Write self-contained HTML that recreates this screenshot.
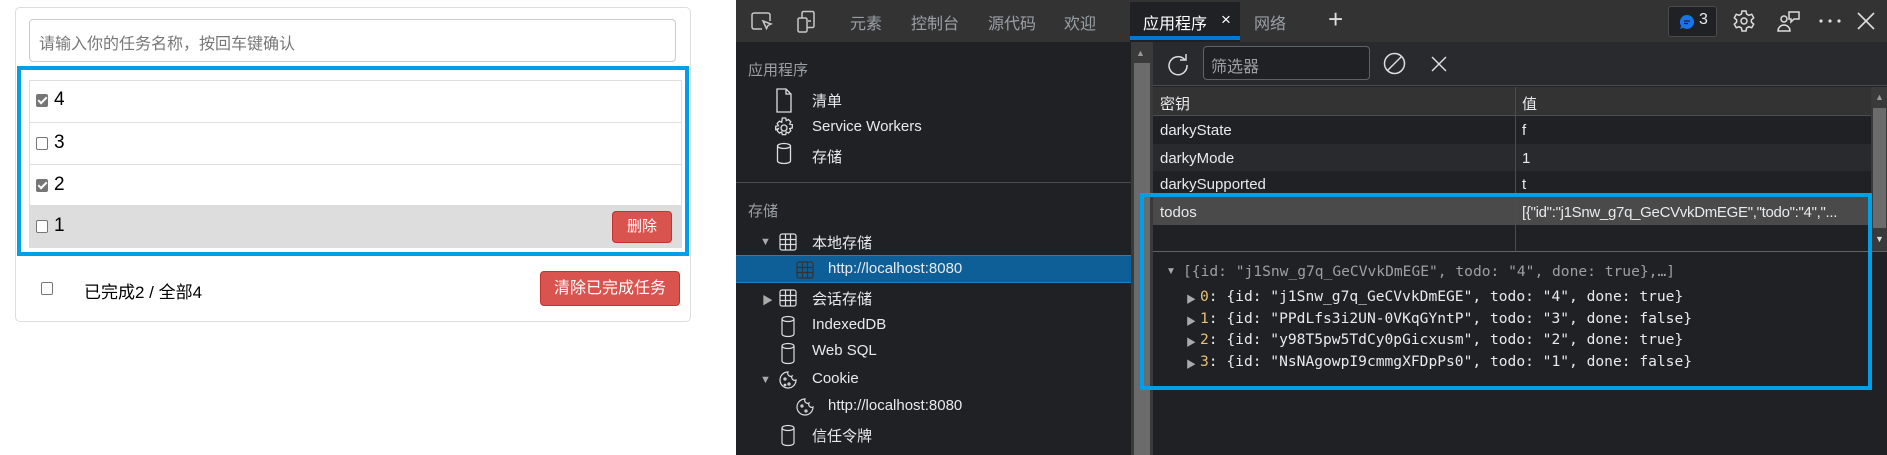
<!DOCTYPE html>
<html><head><meta charset="utf-8"><style>
*{box-sizing:border-box;margin:0;padding:0}
body{width:1887px;height:455px;position:relative;overflow:hidden;background:#fff;font-family:"Liberation Sans","Noto Sans CJK SC",sans-serif}
.a{position:absolute}
.cb{position:absolute;width:12px;height:13px;border:1px solid #767676;border-radius:2px;background:#fff}
.cb.on{background:#767676}
.cb.on:after{content:"";position:absolute;left:3px;top:0px;width:3px;height:7px;border:solid #fff;border-width:0 2px 2px 0;transform:rotate(45deg)}
.row{position:absolute;left:29px;width:653px;height:42px;border-top:1px solid #ddd;font-size:19px;color:#000}
.dt{color:#e8eaed;font-size:15px;white-space:nowrap}
.tb{color:#9aa0a6;font-size:16px}
.si{position:absolute;left:812px;color:#e8eaed;font-size:15px;white-space:nowrap}
.mono{font-family:"DejaVu Sans Mono","Liberation Mono",monospace;font-size:14.6px;white-space:pre;color:#e8eaed}
</style></head><body>
<!-- left -->
<div class="a" style="left:15px;top:7px;width:676px;height:315px;border:1px solid #ddd;border-radius:5px"></div>
<div class="a" style="left:29px;top:19px;width:647px;height:43px;border:1px solid #ccc;border-radius:4px;font-size:16px;color:#777;padding:10px 0 0 9px">请输入你的任务名称，按回车键确认</div>
<div class="a" style="left:29px;top:80px;width:653px;height:168px;border:1px solid #ddd"></div>
<div class="row" style="top:80px;border-top:none"><div class="cb on" style="left:7px;top:14px"></div><span class="a" style="left:25px;top:9px">4</span></div>
<div class="row" style="top:122px"><div class="cb" style="left:7px;top:14px"></div><span class="a" style="left:25px;top:9px">3</span></div>
<div class="row" style="top:164px"><div class="cb on" style="left:7px;top:14px"></div><span class="a" style="left:25px;top:9px">2</span></div>
<div class="row" style="top:205px;height:43px;background:#ddd"><div class="cb" style="left:7px;top:14px"></div><span class="a" style="left:25px;top:9px">1</span>
<div class="a" style="left:583px;top:5px;width:60px;height:32px;background:#d9534f;border:1px solid #c9302c;border-radius:4px;color:#fff;font-size:15px;text-align:center;line-height:30px">删除</div></div>
<div class="a" style="left:17px;top:66px;width:672px;height:190px;border:4px solid #00a0e9"></div>
<div class="cb" style="left:41px;top:282px"></div>
<div class="a" style="left:84px;top:278px;font-size:17px;color:#000">已完成2 / 全部4</div>
<div class="a" style="left:540px;top:271px;width:140px;height:35px;background:#d9534f;border:1px solid #c9302c;border-radius:4px;color:#fff;font-size:16px;text-align:center;line-height:33px">清除已完成任务</div>
<!-- devtools -->
<div class="a" style="left:736px;top:0;width:1151px;height:455px;background:#202124"></div>
<div class="a" style="left:736px;top:0;width:1151px;height:42px;background:#333"></div>
<svg class="a" style="left:750px;top:10px" width="70" height="24" viewBox="0 0 70 24" fill="none" stroke="#c8c8c8" stroke-width="1.5"><path d="M12 19H4a2 2 0 0 1-2-2V5a2 2 0 0 1 2-2h14a2 2 0 0 1 2 2v6"/><path d="M13 11l8 3-3 1.5-1.5 3z"/><rect x="48" y="8" width="9" height="14" rx="1.5"/><path d="M52 8V3a1.5 1.5 0 0 1 1.5-1.5h9A1.5 1.5 0 0 1 64 3v13a1.5 1.5 0 0 1-1.5 1.5H57"/><path d="M58 11h3"/></svg>
<div class="a tb" style="left:850px;top:10px">元素</div>
<div class="a tb" style="left:911px;top:10px">控制台</div>
<div class="a tb" style="left:988px;top:10px">源代码</div>
<div class="a tb" style="left:1064px;top:10px">欢迎</div>
<div class="a" style="left:1130px;top:2px;width:110px;height:40px;background:#202124"></div>
<div class="a" style="left:1130px;top:36px;width:110px;height:4px;background:#0078d4"></div>
<div class="a" style="left:1143px;top:10px;color:#fff;font-size:16px">应用程序</div>
<div class="a" style="left:1221px;top:10px;color:#fff;font-size:17px">×</div>
<div class="a tb" style="left:1254px;top:10px">网络</div>
<div class="a" style="left:1328px;top:4px;color:#ddd;font-size:26px;font-weight:lighter">+</div>
<div class="a" style="left:1668px;top:6px;width:49px;height:31px;background:#202124;border:1px solid #4a4a4a;border-radius:3px"></div>
<svg class="a" style="left:1679px;top:14px" width="16" height="16" viewBox="0 0 16 16"><path d="M8 1a7 7 0 1 1-4 12.7L1 15l1.2-3A7 7 0 0 1 8 1z" fill="#1a73e8"/><path d="M5 7h6M5 9.5h4" stroke="#202124" stroke-width="1.2"/></svg>
<div class="a" style="left:1699px;top:11px;color:#e8eaed;font-size:16px">3</div>
<svg class="a" style="left:1732px;top:9px" width="24" height="24" viewBox="0 0 24 24" fill="none" stroke="#ddd" stroke-width="1.5"><path d="M10 2h4l.6 3 2.2 1.3 2.9-1 2 3.5-2.3 2v2.4l2.3 2-2 3.5-2.9-1-2.2 1.3-.6 3h-4l-.6-3-2.2-1.3-2.9 1-2-3.5 2.3-2v-2.4l-2.3-2 2-3.5 2.9 1L9.4 5z"/><circle cx="12" cy="12" r="3"/></svg>
<svg class="a" style="left:1777px;top:9px" width="26" height="24" viewBox="0 0 26 24" fill="none" stroke="#ddd" stroke-width="1.5"><circle cx="7" cy="10" r="3"/><path d="M1 22a6 6 0 0 1 12 0z"/><path d="M12 3h10v7h-5l-3 3v-3h-2z"/></svg>
<svg class="a" style="left:1818px;top:18px" width="24" height="6" fill="#ddd"><circle cx="3" cy="3" r="1.6"/><circle cx="12" cy="3" r="1.6"/><circle cx="21" cy="3" r="1.6"/></svg>
<svg class="a" style="left:1857px;top:12px" width="18" height="18" stroke="#ddd" stroke-width="1.6"><path d="M1 1l16 16M17 1L1 17"/></svg>
<!-- sidebar -->
<div class="a" style="left:748px;top:59px;color:#9aa0a6;font-size:15px">应用程序</div>
<svg class="a" style="left:774px;top:88px" width="20" height="80" viewBox="0 0 20 80" fill="none" stroke="#ddd" stroke-width="1.3"><path d="M3 1h9l5 5v18H3z"/><path d="M12 1v5h5"/><circle cx="10" cy="40" r="3"/><path d="M8.3 30h3.4l.6 2.6 2.2-1.1 2.3 2.3-1.1 2.2 2.6.6v3.4l-2.6.6 1.1 2.2-2.3 2.3-2.2-1.1-.6 2.6H8.3l-.6-2.6-2.2 1.1-2.3-2.3 1.1-2.2L1.7 41.7v-3.4l2.6-.6-1.1-2.2 2.3-2.3 2.2 1.1z"/><ellipse cx="10" cy="58" rx="6.5" ry="2.5"/><path d="M3.5 58v15a6.5 2.5 0 0 0 13 0V58"/></svg>
<div class="si" style="top:90px">清单</div>
<div class="si" style="top:118px">Service Workers</div>
<div class="si" style="top:146px">存储</div>
<div class="a" style="left:736px;top:182px;width:395px;height:1px;background:#494c50"></div>
<div class="a" style="left:748px;top:200px;color:#9aa0a6;font-size:15px">存储</div>
<div class="a" style="left:736px;top:255px;width:395px;height:28px;background:#0e5f98;border-top:1px solid #1a82c8;border-bottom:1px solid #1a82c8"></div>
<div class="a" style="left:760px;top:236px;color:#aaa;font-size:11px">▼</div>
<div class="a" style="left:762px;top:292px;color:#aaa;font-size:11px">▶</div>
<div class="a" style="left:760px;top:374px;color:#aaa;font-size:11px">▼</div>
<svg class="a" style="left:779px;top:232px" width="48" height="220" viewBox="0 0 48 220" fill="none" stroke="#ddd" stroke-width="1.2"><rect x="1" y="2" width="16" height="16" rx="2"/><path d="M1 7.5h16M1 12.5h16M6.5 2v16M11.5 2v16"/><g transform="translate(17,28)" stroke="#333"><rect x="1" y="2" width="16" height="16" rx="2"/><path d="M1 7.5h16M1 12.5h16M6.5 2v16M11.5 2v16"/></g><g transform="translate(0,56)"><rect x="1" y="2" width="16" height="16" rx="2"/><path d="M1 7.5h16M1 12.5h16M6.5 2v16M11.5 2v16"/></g><g transform="translate(2,84)"><ellipse cx="7" cy="3" rx="6" ry="2.5"/><path d="M1 3v15a6 2.5 0 0 0 12 0V3"/></g><g transform="translate(2,111)"><ellipse cx="7" cy="3" rx="6" ry="2.5"/><path d="M1 3v15a6 2.5 0 0 0 12 0V3"/></g><path d="M9 140a8 8 0 1 0 8 8 3 3 0 0 1-4-4 3 3 0 0 1-4-4z"/><circle cx="6" cy="147" r="1"/><circle cx="10" cy="152" r="1"/><circle cx="6" cy="153" r="0.8"/><g transform="translate(17,27)"><path d="M9 140a8 8 0 1 0 8 8 3 3 0 0 1-4-4 3 3 0 0 1-4-4z"/><circle cx="6" cy="147" r="1"/><circle cx="10" cy="152" r="1"/></g><g transform="translate(2,193)"><ellipse cx="7" cy="3" rx="6" ry="2.5"/><path d="M1 3v15a6 2.5 0 0 0 12 0V3"/></g></svg>
<div class="si" style="top:232px">本地存储</div>
<div class="si" style="top:260px;left:828px">http://localhost:8080</div>
<div class="si" style="top:288px">会话存储</div>
<div class="si" style="top:316px">IndexedDB</div>
<div class="si" style="top:342px">Web SQL</div>
<div class="si" style="top:370px">Cookie</div>
<div class="si" style="top:397px;left:828px">http://localhost:8080</div>
<div class="si" style="top:425px">信任令牌</div>
<div class="a" style="left:1131px;top:42px;width:22px;height:413px;background:#3a3a3a"></div>
<div class="a" style="left:1134px;top:63px;width:16px;height:392px;background:#6b6b6b"></div>
<div class="a" style="left:1136px;top:48px;color:#999;font-size:9px">▲</div>
<!-- right panel -->
<div class="a" style="left:1153px;top:42px;width:734px;height:44px;background:#292a2d;border-bottom:1px solid #494c50"></div>
<svg class="a" style="left:1166px;top:52px" width="24" height="24" fill="none" stroke="#ddd" stroke-width="1.5"><path d="M19 8A9 9 0 1 0 21 13"/><path d="M20 2v6h-6"/></svg>
<div class="a" style="left:1203px;top:46px;width:167px;height:34px;background:#202124;border:1px solid #5f6368;border-radius:4px;color:#9aa0a6;font-size:16px;padding:6px 0 0 7px">筛选器</div>
<svg class="a" style="left:1383px;top:52px" width="23" height="23" fill="none" stroke="#ddd" stroke-width="1.5"><circle cx="11.5" cy="11.5" r="10"/><path d="M4.5 18.5l14-14"/></svg>
<svg class="a" style="left:1431px;top:56px" width="16" height="16" stroke="#ddd" stroke-width="1.5"><path d="M1 1l14 14M15 1L1 15"/></svg>
<div class="a" style="left:1153px;top:87px;width:718px;height:28px;background:#333"></div>
<div class="a" style="left:1153px;top:115px;width:718px;height:29px;background:#202124"></div>
<div class="a" style="left:1153px;top:144px;width:718px;height:27px;background:#292a2d"></div>
<div class="a" style="left:1153px;top:171px;width:718px;height:26px;background:#202124"></div>
<div class="a" style="left:1153px;top:197px;width:718px;height:28px;background:#4a4a4a"></div>
<div class="a" style="left:1153px;top:225px;width:718px;height:26px;background:#202124"></div>
<div class="a" style="left:1153px;top:115px;width:718px;height:1px;background:#494c50"></div>
<div class="a" style="left:1515px;top:87px;width:1px;height:164px;background:#494c50"></div>
<div class="a" style="left:1153px;top:251px;width:734px;height:1px;background:#5f6368"></div>
<div class="a" style="left:1871px;top:87px;width:16px;height:164px;background:#3a3a3a"></div>
<div class="a" style="left:1873px;top:108px;width:13px;height:120px;background:#6b6b6b"></div>
<div class="a" style="left:1875px;top:92px;color:#999;font-size:9px">▲</div>
<div class="a" style="left:1875px;top:234px;color:#ddd;font-size:9px">▼</div>
<div class="a dt" style="left:1160px;top:93px">密钥</div><div class="a dt" style="left:1522px;top:93px">值</div>
<div class="a dt" style="left:1160px;top:122px">darkyState</div><div class="a dt" style="left:1522px;top:122px">f</div>
<div class="a dt" style="left:1160px;top:150px">darkyMode</div><div class="a dt" style="left:1522px;top:150px">1</div>
<div class="a dt" style="left:1160px;top:176px">darkySupported</div><div class="a dt" style="left:1522px;top:176px">t</div>
<div class="a dt" style="left:1160px;top:204px">todos</div><div class="a dt" style="left:1522px;top:204px;letter-spacing:-0.3px">[{"id":"j1Snw_g7q_GeCVvkDmEGE","todo":"4","...</div>
<div class="a" style="left:1166px;top:266px;color:#aaa;font-size:10px">▼</div>
<div class="a mono" style="left:1183px;top:263px;color:#9aa0a6">[{id: "j1Snw_g7q_GeCVvkDmEGE", todo: "4", done: true},…]</div>
<div class="a" style="left:1186px;top:290px;color:#aaa;font-size:10px;line-height:21.7px">▶<br>▶<br>▶<br>▶</div>
<div class="a mono" style="left:1200px;top:286px;line-height:21.7px"><span style="color:#e5c07b">0</span>: {id: "j1Snw_g7q_GeCVvkDmEGE", todo: "4", done: true}
<span style="color:#e5c07b">1</span>: {id: "PPdLfs3i2UN-0VKqGYntP", todo: "3", done: false}
<span style="color:#e5c07b">2</span>: {id: "y98T5pw5TdCy0pGicxusm", todo: "2", done: true}
<span style="color:#e5c07b">3</span>: {id: "NsNAgowpI9cmmgXFDpPs0", todo: "1", done: false}</div>
<div class="a" style="left:1140px;top:193px;width:732px;height:197px;border:4px solid #00a0e9"></div>
</body></html>
